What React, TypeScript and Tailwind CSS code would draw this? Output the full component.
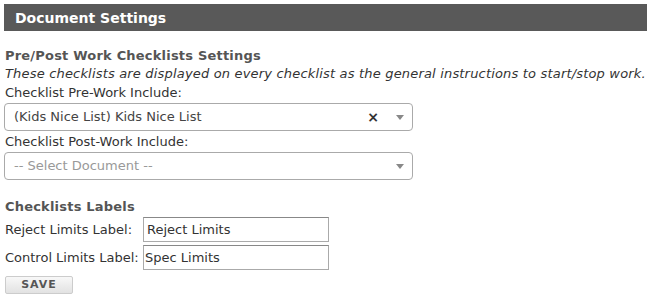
export default function App() {
  return (
    <div className="w-[647px] h-[298px] bg-white pt-1 pl-1 text-[13px] text-[#333] leading-[18px]" style={{ fontFamily: '"DejaVu Sans", sans-serif' }}>
      <div className="h-[27px] bg-[#595959] flex items-center pl-[11px]">
        <span className="text-white font-bold text-[14px]">Document Settings</span>
      </div>
      <div className="pl-px mt-[16px]">
        <div className="font-bold text-[#555] leading-[18px] tracking-[0.2px]">Pre/Post Work Checklists Settings</div>
        <div className="italic whitespace-nowrap tracking-[0.18px]">These checklists are displayed on every checklist as the general instructions to start/stop work.</div>
        <div className="mt-px">Checklist Pre-Work Include:</div>
      </div>
      <div className="w-[409px] h-[28px] mt-[1px] border border-[#aaa] rounded-[4px] flex items-center pl-[9px] pr-[8px]">
        <span className="flex-1 text-[#444]">(Kids Nice List) Kids Nice List</span>
        <span className="font-bold text-[#333] text-[14px] mr-[17px]">×</span>
        <span className="w-0 h-0 border-l-[4px] border-r-[4px] border-t-[5px] border-l-transparent border-r-transparent border-t-[#888]"></span>
      </div>
      <div className="pl-px mt-[2px]">Checklist Post-Work Include:</div>
      <div className="w-[409px] h-[28px] mt-px border border-[#aaa] rounded-[4px] flex items-center pl-[9px] pr-[8px]">
        <span className="flex-1 text-[#999]">-- Select Document --</span>
        <span className="w-0 h-0 border-l-[4px] border-r-[4px] border-t-[5px] border-l-transparent border-r-transparent border-t-[#888]"></span>
      </div>
      <div className="pl-px mt-[18px] font-bold text-[#555] tracking-[0.2px]">Checklists Labels</div>
      <div className="flex items-center mt-[1px]">
        <span className="w-[139px] pl-px whitespace-nowrap">Reject Limits Label:</span>
        <div className="w-[186px] h-[25px] border border-[#aaa] border-t-[#888] flex items-center pl-[3px]">Reject Limits</div>
      </div>
      <div className="flex items-center mt-[3px]">
        <span className="w-[139px] pl-px whitespace-nowrap">Control Limits Label:</span>
        <div className="w-[186px] h-[25px] border border-[#aaa] border-t-[#888] flex items-center pl-[1px]">Spec Limits</div>
      </div>
      <div className="ml-px mt-[6px] w-[68px] h-[18px] border border-[#ccc] rounded-[2px] bg-gradient-to-b from-[#f8f8f8] to-[#e2e2e2] flex items-center justify-center">
        <span className="font-bold text-[#555] text-[11px] tracking-[1px]">SAVE</span>
      </div>
    </div>
  );
}
